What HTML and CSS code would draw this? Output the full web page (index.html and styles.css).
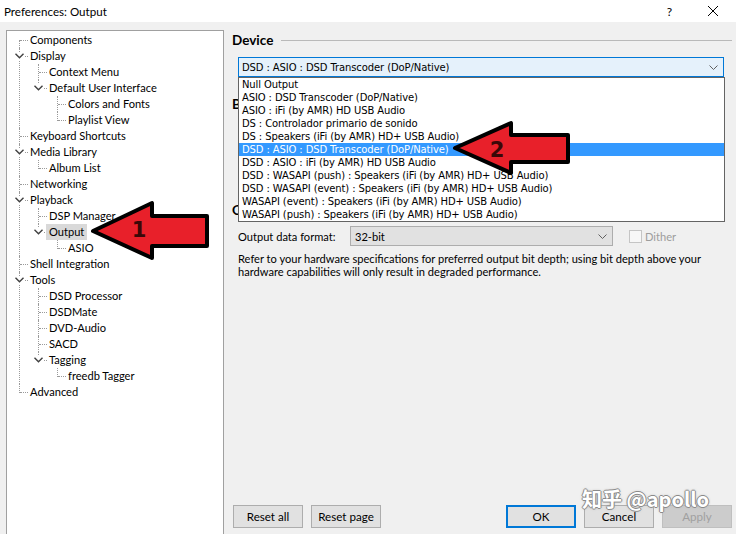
FILE: index.html
```html
<!DOCTYPE html>
<html>
<head>
<meta charset="utf-8">
<title>Preferences: Output</title>
<link rel="stylesheet" href="styles.css">
</head>
<body>
<div class="window">
  <div class="titlebar">
    <span class="title">Preferences: Output</span>
    <span class="help">?</span>
    <svg class="close" width="12" height="12" viewBox="0 0 12 12"><path d="M1 1L11 11M11 1L1 11"/></svg>
  </div>
  <div class="main">
    <div class="tree">
      <ul class="root">
        <li class="first"><div class="row"><span class="label">Components</span></div></li>
        <li><div class="row"><span class="chev"><svg width="9" height="6" viewBox="0 0 9 6"><path d="M0.5 0.8L4.5 4.8L8.5 0.8"/></svg></span><span class="label">Display</span></div>
          <ul>
            <li><div class="row"><span class="label">Context Menu</span></div></li>
            <li class="last"><div class="row"><span class="chev"><svg width="9" height="6" viewBox="0 0 9 6"><path d="M0.5 0.8L4.5 4.8L8.5 0.8"/></svg></span><span class="label">Default User Interface</span></div>
              <ul>
                <li><div class="row"><span class="label">Colors and Fonts</span></div></li>
                <li class="last"><div class="row"><span class="label">Playlist View</span></div></li>
              </ul>
            </li>
          </ul>
        </li>
        <li><div class="row"><span class="label">Keyboard Shortcuts</span></div></li>
        <li><div class="row"><span class="chev"><svg width="9" height="6" viewBox="0 0 9 6"><path d="M0.5 0.8L4.5 4.8L8.5 0.8"/></svg></span><span class="label">Media Library</span></div>
          <ul>
            <li class="last"><div class="row"><span class="label">Album List</span></div></li>
          </ul>
        </li>
        <li><div class="row"><span class="label">Networking</span></div></li>
        <li><div class="row"><span class="chev"><svg width="9" height="6" viewBox="0 0 9 6"><path d="M0.5 0.8L4.5 4.8L8.5 0.8"/></svg></span><span class="label">Playback</span></div>
          <ul>
            <li><div class="row"><span class="label">DSP Manager</span></div></li>
            <li class="last"><div class="row"><span class="chev"><svg width="9" height="6" viewBox="0 0 9 6"><path d="M0.5 0.8L4.5 4.8L8.5 0.8"/></svg></span><span class="label selected">Output</span></div>
              <ul>
                <li class="last"><div class="row"><span class="label">ASIO</span></div></li>
              </ul>
            </li>
          </ul>
        </li>
        <li><div class="row"><span class="label">Shell Integration</span></div></li>
        <li><div class="row"><span class="chev"><svg width="9" height="6" viewBox="0 0 9 6"><path d="M0.5 0.8L4.5 4.8L8.5 0.8"/></svg></span><span class="label">Tools</span></div>
          <ul>
            <li><div class="row"><span class="label">DSD Processor</span></div></li>
            <li><div class="row"><span class="label">DSDMate</span></div></li>
            <li><div class="row"><span class="label">DVD-Audio</span></div></li>
            <li><div class="row"><span class="label">SACD</span></div></li>
            <li class="last"><div class="row"><span class="chev"><svg width="9" height="6" viewBox="0 0 9 6"><path d="M0.5 0.8L4.5 4.8L8.5 0.8"/></svg></span><span class="label">Tagging</span></div>
              <ul>
                <li class="last"><div class="row"><span class="label">freedb Tagger</span></div></li>
              </ul>
            </li>
          </ul>
        </li>
        <li class="last"><div class="row"><span class="label">Advanced</span></div></li>
      </ul>
    </div>

    <div class="panel">
      <section class="group device">
        <div class="ghead"><span>Device</span></div>
        <div class="combo-wrap">
          <div class="combo">
            <span>DSD : ASIO : DSD Transcoder (DoP/Native)</span>
            <svg class="cchev" width="9" height="5" viewBox="0 0 9 5"><path d="M0.5 0.5L4.5 4.5L8.5 0.5"/></svg>
          </div>
          <ul class="droplist">
            <li>Null Output</li>
            <li>ASIO : DSD Transcoder (DoP/Native)</li>
            <li>ASIO : iFi (by AMR) HD USB Audio</li>
            <li>DS : Controlador primario de sonido</li>
            <li>DS : Speakers (iFi (by AMR) HD+ USB Audio)</li>
            <li class="hl">DSD : ASIO : DSD Transcoder (DoP/Native)</li>
            <li>DSD : ASIO : iFi (by AMR) HD USB Audio</li>
            <li>DSD : WASAPI (push) : Speakers (iFi (by AMR) HD+ USB Audio)</li>
            <li>DSD : WASAPI (event) : Speakers (iFi (by AMR) HD+ USB Audio)</li>
            <li>WASAPI (event) : Speakers (iFi (by AMR) HD+ USB Audio)</li>
            <li>WASAPI (push) : Speakers (iFi (by AMR) HD+ USB Audio)</li>
          </ul>
        </div>
      </section>

      <section class="group buffer">
        <div class="ghead plain"><span>Buffer length</span></div>
      </section>

      <section class="group format">
        <div class="ghead plain"><span>Output format</span></div>
        <div class="fmt-row">
          <span class="fmt-label">Output data format:</span>
          <div class="select">
            <span>32-bit</span>
            <svg class="cchev" width="9" height="5" viewBox="0 0 9 5"><path d="M0.5 0.5L4.5 4.5L8.5 0.5"/></svg>
          </div>
          <span class="check"></span>
          <span class="dither">Dither</span>
        </div>
        <p class="note">Refer to your hardware specifications for preferred output bit depth; using bit depth above your hardware capabilities will only result in degraded performance.</p>
      </section>

      <div class="buttons">
        <button class="btn">Reset all</button>
        <button class="btn">Reset page</button>
        <span class="spacer"></span>
        <button class="btn default">OK</button>
        <button class="btn">Cancel</button>
        <button class="btn disabled">Apply</button>
      </div>
    </div>
  </div>

  <div class="watermark">知乎 @apollo</div>

  <svg class="arrows" width="736" height="534" viewBox="0 0 736 534">
    <polygon points="93,231 152,203 152,216 207,216 207,246 152,246 152,258" class="arrow"/>
    <text x="139" y="237" class="num">1</text>
    <polygon points="455,148 511,123 511,135 568,135 568,162 511,162 511,173" class="arrow"/>
    <text x="497" y="157" class="num">2</text>
  </svg>
</div>
</body>
</html>
```

FILE: styles.css
```css
* { box-sizing: border-box; }
html, body { margin: 0; padding: 0; }
body {
  width: 736px;
  height: 534px;
  overflow: hidden;
  background: #f0f0f0;
  font-family: "Lato", "Open Sans", sans-serif;
  font-size: 11.1px;
  color: #000;
}
.window {
  position: relative;
  width: 736px;
  height: 534px;
  display: flex;
  flex-direction: column;
}
.titlebar {
  height: 22px;
  background: #fff;
  display: flex;
  align-items: center;
  padding-left: 4px;
  flex: none;
}
.title { flex: 1; font-size: 11.6px; }
.help { font-size: 12px; margin-right: 35px; }
.close { margin-right: 17px; }
.close path { stroke: #000; stroke-width: 1; fill: none; }

.main {
  flex: 1;
  display: flex;
  min-height: 0;
}

/* tree */
.tree {
  margin: 8px 0 0 6px;
  width: 218px;
  height: 520px;
  background: #fff;
  border: 1px solid #a0a0a0;
  padding-top: 1px;
  flex: none;
}
.tree ul { list-style: none; margin: 0; padding: 0 0 0 19px; }
.tree ul.root { padding: 0; }
.tree li { position: relative; }
.tree li::before {
  content: "";
  position: absolute;
  left: 12px;
  top: 0;
  bottom: 0;
  border-left: 1px dotted #9a9a9a;
}
.tree li.first::before { top: 8px; }
.tree li.last::before { bottom: auto; height: 9px; }
.row {
  position: relative;
  height: 16px;
  line-height: 16px;
  padding-left: 20px;
  white-space: nowrap;
}
.row::before {
  content: "";
  position: absolute;
  left: 13px;
  top: 8px;
  width: 8px;
  border-top: 1px dotted #9a9a9a;
}
.chev {
  position: absolute;
  left: 7px;
  top: 4px;
  width: 11px;
  height: 8px;
  background: #fff;
  display: flex;
  align-items: center;
  justify-content: center;
  z-index: 1;
}
.chev path { stroke: #404040; stroke-width: 1.4; fill: none; }
.label {
  position: relative;
  display: inline-block;
  padding: 0 3px;
  height: 16px;
}
.label.selected { background: #d9d9d9; }

/* panel */
.panel {
  flex: 1;
  display: flex;
  flex-direction: column;
  padding: 10px 4px 6px 8px;
  min-width: 0;
}
.ghead {
  display: flex;
  align-items: center;
  height: 16px;
  font-weight: bold;
  font-size: 13.5px;
}
.ghead::after {
  content: "";
  flex: 1;
  margin-left: 8px;
  border-top: 1px solid #b9b9b9;
}
.ghead.plain::after { display: none; }

.combo-wrap {
  position: relative;
  margin: 9px 8px 0 6px;
}
.combo {
  height: 20px;
  background: #e5f1fb;
  border: 1px solid #0078d7;
  display: flex;
  align-items: center;
  padding-left: 3px;
  font-family: "DejaVu Sans", sans-serif;
  font-size: 10px;
  letter-spacing: -0.1px;
}
.combo span { flex: 1; }
.cchev { margin-right: 5px; }
.cchev path { stroke: #606060; stroke-width: 1; fill: none; }

.droplist {
  position: absolute;
  left: 0;
  right: -1px;
  top: 20px;
  margin: 0;
  padding: 0;
  list-style: none;
  background: #fff;
  border: 1px solid #646464;
  font-family: "DejaVu Sans", sans-serif;
  font-size: 10px;
  letter-spacing: -0.12px;
  z-index: 5;
}
.droplist li {
  height: 13px;
  line-height: 13px;
  padding-left: 3px;
  white-space: nowrap;
}
.droplist li.hl { background: #3399ff; color: #fff; }

.buffer { margin-top: 19px; height: 106px; }

.fmt-row {
  display: flex;
  align-items: center;
  margin: 8px 0 0 6px;
  height: 20px;
}
.fmt-label { width: 112px; }
.select {
  width: 263px;
  height: 20px;
  background: #e1e1e1;
  border: 1px solid #adadad;
  display: flex;
  align-items: center;
  padding-left: 4px;
}
.select span { flex: 1; }
.check {
  width: 13px;
  height: 13px;
  border: 1px solid #c5c5c5;
  background: #f7f7f7;
  margin-left: 16px;
}
.dither { color: #9d9d9d; margin-left: 3px; }
.note {
  margin: 6px 0 0 6px;
  line-height: 13px;
  width: 480px;
}

.buttons {
  margin-top: auto;
  display: flex;
  gap: 8px;
  padding-left: 1px;
}
.spacer { flex: 1; }
.btn {
  width: 70px;
  height: 23px;
  background: #e1e1e1;
  border: 1px solid #adadad;
  font-family: "Lato", "Open Sans", sans-serif;
  font-size: 11.6px;
  color: #000;
  padding: 0;
}
.btn.default { border: 2px solid #0078d7; }
.btn.disabled { background: #cccccc; border-color: #bfbfbf; color: #a0a0a0; }

.watermark {
  position: absolute;
  left: 582px;
  top: 486px;
  font-family: "Noto Sans CJK SC", "Noto Sans", sans-serif;
  font-weight: bold;
  font-size: 20px;
  line-height: 26px;
  color: #fff;
  text-shadow: -1px 0 0 #8a8a8a, 1px 0 0 #8a8a8a, 0 -1px 0 #8a8a8a, 0 1px 0 #8a8a8a, 0 0 3px #aaa;
  z-index: 10;
}

.arrows {
  position: absolute;
  left: 0;
  top: 0;
  pointer-events: none;
  z-index: 20;
}
.arrow {
  fill: #e8202a;
  stroke: #000;
  stroke-width: 4;
  stroke-linejoin: round;
}
.num {
  font-family: "DejaVu Sans", sans-serif;
  font-weight: bold;
  font-size: 21px;
  fill: #3a0808;
  text-anchor: middle;
}
```
